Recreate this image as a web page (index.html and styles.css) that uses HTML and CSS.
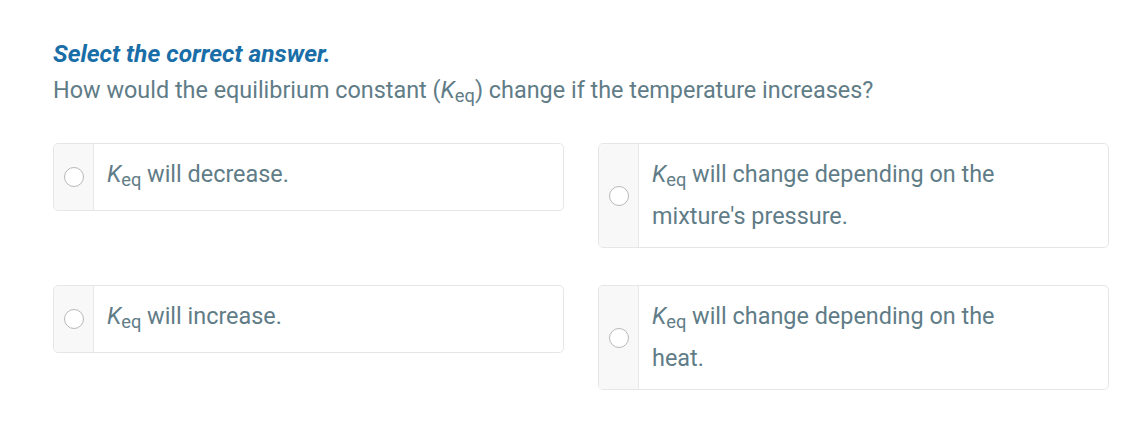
FILE: index.html
```html
<!DOCTYPE html>
<html lang="en">
<head>
<meta charset="utf-8">
<title>Select the correct answer</title>
<link rel="stylesheet" href="styles.css">
</head>
<body>
<div class="quiz">
  <p class="prompt">Select the correct answer.</p>
  <p class="question">How would the equilibrium constant (<span class="k">K</span><sub>eq</sub>) change if the temperature increases?</p>
  <div class="options">
    <label class="option">
      <span class="radio-cell"><span class="radio"></span></span>
      <span class="text"><span class="k">K</span><sub>eq</sub> will decrease.</span>
    </label>
    <label class="option">
      <span class="radio-cell"><span class="radio"></span></span>
      <span class="text"><span class="k">K</span><sub>eq</sub> will change depending on the mixture's pressure.</span>
    </label>
    <label class="option">
      <span class="radio-cell"><span class="radio"></span></span>
      <span class="text"><span class="k">K</span><sub>eq</sub> will increase.</span>
    </label>
    <label class="option">
      <span class="radio-cell"><span class="radio"></span></span>
      <span class="text"><span class="k">K</span><sub>eq</sub> will change depending on the heat.</span>
    </label>
  </div>
</div>
</body>
</html>
```
FILE: styles.css
```css
html, body {
  margin: 0;
  padding: 0;
  background: #ffffff;
}

.quiz {
  padding: 40px 0 0 53px;
  width: 1056px;
  font-family: Roboto, "Liberation Sans", sans-serif;
  color: #5f7c87;
}

.prompt {
  margin: 0;
  font-size: 24.5px;
  line-height: 28px;
  font-weight: 700;
  font-style: italic;
  color: #1a6ea8;
}

.question {
  margin: 7px 0 0 0;
  font-size: 23.4px;
  line-height: 30px;
}

.k {
  font-style: italic;
}

.question sub {
  font-size: 0.78em;
  vertical-align: -4px;
  line-height: 0;
}

.text sub {
  font-size: 0.78em;
  vertical-align: -4px;
  line-height: 36px;
}

.options {
  margin-top: 38px;
  display: grid;
  grid-template-columns: 511px 511px;
  column-gap: 34px;
  row-gap: 37px;
  align-items: start;
}

.option {
  display: flex;
  border: 1px solid #e6e6e6;
  border-radius: 5px;
  overflow: hidden;
  background: #ffffff;
}

.radio-cell {
  flex: 0 0 39px;
  display: flex;
  align-items: center;
  justify-content: center;
  background: #f8f8f8;
  border-right: 1px solid #e8e8e8;
}

.radio {
  box-sizing: border-box;
  width: 20px;
  height: 20px;
  border-radius: 50%;
  border: 1px solid #b8b8b8;
  background: #ffffff;
}

.text {
  flex: 1;
  padding: 12px 80px 12px 13px;
  font-size: 23.4px;
  line-height: 37px;
}
```
